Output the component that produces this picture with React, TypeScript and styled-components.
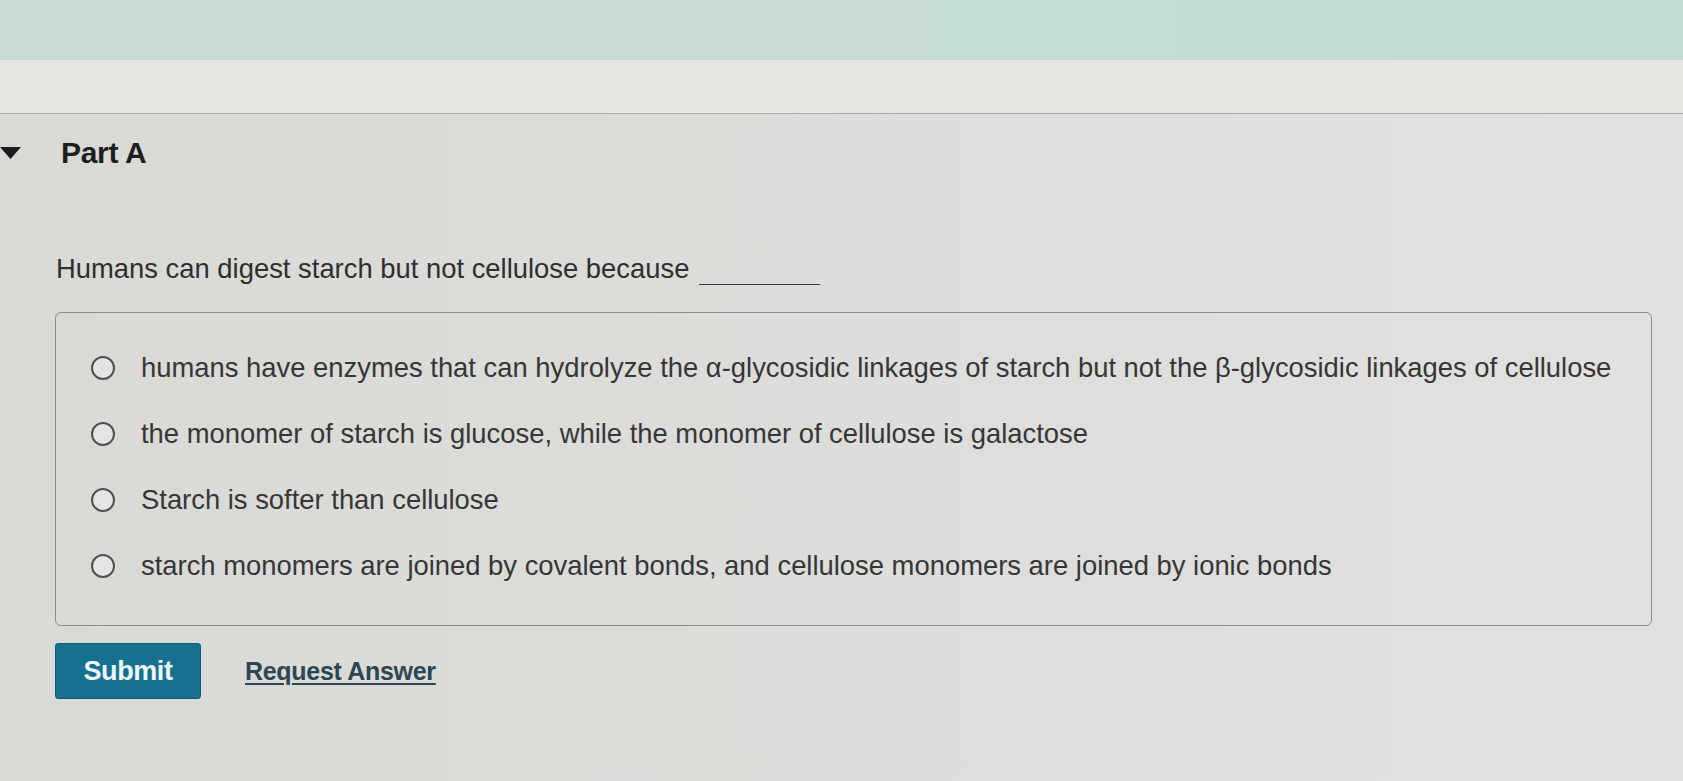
import React from 'react'
import styled, { createGlobalStyle } from 'styled-components'

const GlobalStyle = createGlobalStyle`
  html, body {
    margin: 0;
    padding: 0;
  }
  body {
    font-family: "Liberation Sans", Arial, sans-serif;
    background: #dcdcd9;
  }
`

const Page = styled.div`
  min-height: 100vh;
  background: linear-gradient(90deg, #d9d9d6 0%, #dddddb 55%, #e1e1df 100%);
  overflow: hidden;
`

const TopBand = styled.div`
  height: 60px;
  background: linear-gradient(90deg, #c8dcd7 0%, #c4dbd5 100%);
`

const SubBand = styled.div`
  height: 53px;
  background: #e5e5e2;
  border-bottom: 1px solid #a9a9a7;
`

const Main = styled.main`
  padding: 0 31px 0 55px;
`

const PartHeader = styled.div`
  display: flex;
  align-items: center;
  margin: 22px 0 0 -55px;
  height: 34px;
`

const Caret = styled.svg`
  width: 21px;
  height: 12px;
  margin-right: 40px;
  fill: #1c1c1c;
`

const PartTitle = styled.h2`
  margin: 0;
  font-size: 30px;
  line-height: 34px;
  font-weight: 700;
  color: #1e1e1e;
  letter-spacing: -0.3px;
`

const Question = styled.p`
  margin: 82px 0 0 1px;
  font-size: 27.4px;
  line-height: 34px;
  color: #2f2f2f;
`

const Blank = styled.span`
  display: inline-block;
  width: 121px;
  margin-left: 10px;
  border-bottom: 1.5px solid #3c3c3c;
  vertical-align: -7px;
`

const OptionsBox = styled.div`
  margin-top: 26px;
  border: 1px solid #8c8c8a;
  border-radius: 6px;
  padding: 22px 0 26px 35px;
  display: flex;
  flex-direction: column;
`

const OptionRow = styled.label`
  display: flex;
  align-items: center;
  height: 66px;
  gap: 26px;
  cursor: pointer;
`

const Radio = styled.span`
  flex: 0 0 auto;
  width: 20px;
  height: 20px;
  border: 2px solid #505050;
  border-radius: 50%;
  background: #e4e4e2;
`

const OptionText = styled.span`
  font-size: 27.4px;
  line-height: 34px;
  color: #363636;
  white-space: nowrap;
`

const Actions = styled.div`
  display: flex;
  align-items: center;
  gap: 44px;
  margin-top: 17px;
`

const SubmitButton = styled.button`
  width: 146px;
  height: 56px;
  border: 1px solid #0f5a74;
  border-radius: 3px;
  background: #18708f;
  color: #eef7fa;
  font-family: "Liberation Sans", Arial, sans-serif;
  font-size: 27px;
  font-weight: 700;
  letter-spacing: -0.4px;
  cursor: pointer;
`

const RequestLink = styled.a`
  font-size: 25px;
  font-weight: 700;
  color: #2c4652;
  text-decoration: underline;
  text-underline-offset: 3px;
  letter-spacing: -0.3px;
  cursor: pointer;
`

const options = [
  'humans have enzymes that can hydrolyze the α-glycosidic linkages of starch but not the β-glycosidic linkages of cellulose',
  'the monomer of starch is glucose, while the monomer of cellulose is galactose',
  'Starch is softer than cellulose',
  'starch monomers are joined by covalent bonds, and cellulose monomers are joined by ionic bonds',
]

const App: React.FC = () => {
  return (
    <>
      <GlobalStyle />
      <Page>
        <TopBand />
        <SubBand />
        <Main>
          <PartHeader>
            <Caret viewBox="0 0 21 12">
              <polygon points="0,0 21,0 10.5,12" />
            </Caret>
            <PartTitle>Part A</PartTitle>
          </PartHeader>

          <Question>
            Humans can digest starch but not cellulose because
            <Blank />
          </Question>

          <OptionsBox>
            {options.map((text) => (
              <OptionRow key={text}>
                <Radio />
                <OptionText>{text}</OptionText>
              </OptionRow>
            ))}
          </OptionsBox>

          <Actions>
            <SubmitButton>Submit</SubmitButton>
            <RequestLink>Request Answer</RequestLink>
          </Actions>
        </Main>
      </Page>
    </>
  )
}

export default App
